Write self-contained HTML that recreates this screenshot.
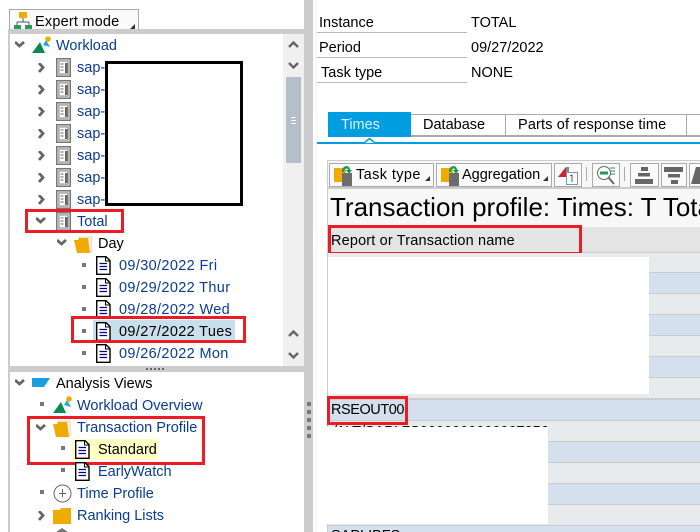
<!DOCTYPE html>
<html><head><meta charset="utf-8">
<style>
html,body{margin:0;padding:0;background:#fff}
#p{position:relative;width:700px;height:532px;overflow:hidden;background:#fff;font-family:"Liberation Sans",sans-serif;font-size:14.5px;color:#000}
#p div,#p svg{position:absolute}
.t{white-space:nowrap;line-height:18px;height:18px}
.b{color:#0a3d91}
.red{border:3px solid #ed1c24;box-sizing:border-box}
.bt{background:#fafafa;border:1px solid #aaa;box-sizing:border-box;height:24px;top:163px}
.dot{width:4px;height:4px;background:#777}
.d{letter-spacing:.35px}
</style></head><body><div id="p">
<svg width="0" height="0" style="position:absolute">
<defs>
<g id="chr"><path d="M1 0 L5 4.500 L1 9" fill="none" stroke="#666" stroke-width="2.800"/></g>
<g id="chd"><path d="M0 1 L4.500 5 L9 1" fill="none" stroke="#666" stroke-width="2.800"/></g>
<g id="srv"><rect x=".7" y=".7" width="13.600" height="17.600" fill="#ddd" stroke="#777" stroke-width="1.400"/><rect x="3" y="3" width="9" height="13" fill="#fff" stroke="#888"/><path d="M4.500 6h3M4.500 9h3M4.500 12h3" stroke="#666"/><rect x="9" y="5" width="2.500" height="10" fill="#666"/></g>
<g id="doc"><path d="M.7 .7H10L14 4.500V18.300H.7Z" fill="#fff" stroke="#000" stroke-width="1.400"/><path d="M3.500 7.500H11M3.500 10.500H11M3.500 13.500H11" stroke="#00008b" stroke-width="1.200"/><path d="M9.500 1V5H14" fill="none" stroke="#000"/></g>
<g id="mt"><path d="M0 17 L8 6 L13 17Z" fill="#0a8a50"/><path d="M11 9 L14 4 L18 11Z" fill="#1ea7e0"/><circle cx="16" cy="3" r="2.800" fill="#f0ab00"/></g>
<g id="fo"><path d="M5 1H18V16H15Z" fill="#f4f0e0" stroke="#d8d0b0" stroke-width=".7"/><path d="M0 4H4L5 2H14L16 17H3Z" fill="#f0ab00"/></g>
<g id="sq"><rect width="4" height="4" fill="#777"/></g>
<g id="tb"><rect x="1" y="3" width="12" height="14" fill="#f0ab00"/><rect x="9" y="8" width="10" height="13" fill="#6d6d6d"/><path d="M10 7 C10 1 16 1 16 5" fill="none" stroke="#1a9a5a" stroke-width="2.400"/><path d="M13 5H19L16 9Z" fill="#1a9a5a"/></g>
</defs></svg>

<!-- top left -->
<div style="left:9px;top:9px;width:130px;height:21px;background:#fafafa;border:1px solid #aaa;box-sizing:border-box"></div>
<svg style="left:14px;top:12px" width="19" height="18"><rect x="5" y="0" width="8" height="6" fill="#f0ab00"/><path d="M9 6V10M3 10H15M3 10V13M15 10V13" fill="none" stroke="#555"/><rect x="0" y="13" width="7" height="5" fill="#2b9a5a"/><rect x="11" y="13" width="7" height="5" fill="#2b9a5a"/></svg>
<div class="t" style="left:35px;top:13px;letter-spacing:.2px">Expert mode</div>
<svg style="left:130px;top:24px" width="5" height="5"><path d="M5 0V5H0Z" fill="#333"/></svg>

<!-- frame -->
<div style="left:8px;top:29px;width:297px;height:5px;background:#ccc"></div>
<div style="left:8px;top:29px;width:2px;height:503px;background:#ccc"></div>
<div style="left:8px;top:366px;width:297px;height:6px;background:#ccc"></div>
<div style="left:146px;top:368px;width:19px;height:2px;background:repeating-linear-gradient(90deg,#666 0 2px,#ccc 2px 4px)"></div>
<div style="left:304px;top:0;width:13px;height:532px;background:linear-gradient(90deg,#ccc 0 9px,#fff 9px,#fff 12px,#eef3f7 12px)"></div>
<div class="dot" style="left:307px;top:402px"></div><div class="dot" style="left:307px;top:410px"></div><div class="dot" style="left:307px;top:418px"></div><div class="dot" style="left:307px;top:426px"></div><div class="dot" style="left:307px;top:434px"></div>

<!-- scrollbar -->
<div style="left:283px;top:34px;width:21px;height:332px;background:#f0f0f0"></div>
<div style="left:286px;top:77px;width:15px;height:86px;background:#b5bfca"></div>
<div style="left:291px;top:117px;width:5px;height:7px;background:repeating-linear-gradient(180deg,#fff 0 1px,#b5bfca 1px 3px)"></div>
<svg style="left:288px;top:41px" width="11" height="7"><path d="M1 6L5.500 1.500L10 6" fill="none" stroke="#666" stroke-width="2.400"/></svg>
<svg style="left:288px;top:62px" width="11" height="7"><path d="M1 1L5.500 5.500L10 1" fill="none" stroke="#666" stroke-width="2.400"/></svg>
<svg style="left:288px;top:330px" width="11" height="7"><path d="M1 6L5.500 1.500L10 6" fill="none" stroke="#666" stroke-width="2.400"/></svg>
<svg style="left:288px;top:352px" width="11" height="7"><path d="M1 1L5.500 5.500L10 1" fill="none" stroke="#666" stroke-width="2.400"/></svg>

<!-- upper tree -->
<svg style="left:15px;top:41px" width="11" height="7"><use href="#chd"/></svg>
<svg style="left:32px;top:36px" width="20" height="18"><use href="#mt"/></svg>
<div class="t b" style="left:56px;top:37px">Workload</div>

<svg style="left:38px;top:63px" width="7" height="10"><use href="#chr"/></svg><svg style="left:56px;top:58px" width="15" height="19"><use href="#srv"/></svg><div class="t b" style="left:77px;top:59px">sap-</div>
<svg style="left:38px;top:85px" width="7" height="10"><use href="#chr"/></svg><svg style="left:56px;top:80px" width="15" height="19"><use href="#srv"/></svg><div class="t b" style="left:77px;top:81px">sap-</div>
<svg style="left:38px;top:107px" width="7" height="10"><use href="#chr"/></svg><svg style="left:56px;top:102px" width="15" height="19"><use href="#srv"/></svg><div class="t b" style="left:77px;top:103px">sap-</div>
<svg style="left:38px;top:129px" width="7" height="10"><use href="#chr"/></svg><svg style="left:56px;top:124px" width="15" height="19"><use href="#srv"/></svg><div class="t b" style="left:77px;top:125px">sap-</div>
<svg style="left:38px;top:151px" width="7" height="10"><use href="#chr"/></svg><svg style="left:56px;top:146px" width="15" height="19"><use href="#srv"/></svg><div class="t b" style="left:77px;top:147px">sap-</div>
<svg style="left:38px;top:173px" width="7" height="10"><use href="#chr"/></svg><svg style="left:56px;top:168px" width="15" height="19"><use href="#srv"/></svg><div class="t b" style="left:77px;top:169px">sap-</div>
<svg style="left:38px;top:195px" width="7" height="10"><use href="#chr"/></svg><svg style="left:56px;top:190px" width="15" height="19"><use href="#srv"/></svg><div class="t b" style="left:77px;top:191px">sap-</div>
<div style="left:105px;top:61px;width:138px;height:145px;background:#fff;border:3px solid #000;box-sizing:border-box"></div>

<svg style="left:36px;top:217px" width="11" height="7"><use href="#chd"/></svg><svg style="left:56px;top:212px" width="15" height="19"><use href="#srv"/></svg><div class="t b" style="left:77px;top:213px">Total</div>
<div class="red" style="left:25px;top:209px;width:99px;height:24px"></div>

<svg style="left:57px;top:239px" width="11" height="7"><use href="#chd"/></svg><svg style="left:74px;top:236px" width="18" height="18"><use href="#fo"/></svg><div class="t" style="left:98px;top:235px">Day</div>

<svg style="left:82px;top:263px" width="4" height="4"><use href="#sq"/></svg><svg style="left:96px;top:256px" width="15" height="19"><use href="#doc"/></svg><div class="t b d" style="left:119px;top:257px">09/30/2022 Fri</div>
<svg style="left:82px;top:285px" width="4" height="4"><use href="#sq"/></svg><svg style="left:96px;top:278px" width="15" height="19"><use href="#doc"/></svg><div class="t b d" style="left:119px;top:279px">09/29/2022 Thur</div>
<svg style="left:82px;top:307px" width="4" height="4"><use href="#sq"/></svg><svg style="left:96px;top:300px" width="15" height="19"><use href="#doc"/></svg><div class="t b d" style="left:119px;top:301px">09/28/2022 Wed</div>
<div style="left:93px;top:320px;width:142px;height:21px;background:#c8dfec"></div>
<svg style="left:82px;top:329px" width="4" height="4"><use href="#sq"/></svg><svg style="left:96px;top:322px" width="15" height="19"><use href="#doc"/></svg><div class="t d" style="left:119px;top:323px">09/27/2022 Tues</div>
<div class="red" style="left:71px;top:316px;width:175px;height:27px"></div>
<svg style="left:82px;top:351px" width="4" height="4"><use href="#sq"/></svg><svg style="left:96px;top:344px" width="15" height="19"><use href="#doc"/></svg><div class="t b d" style="left:119px;top:345px">09/26/2022 Mon</div>

<!-- lower tree -->
<svg style="left:15px;top:379px" width="11" height="7"><use href="#chd"/></svg>
<svg style="left:32px;top:378px" width="19" height="10"><path d="M0 0H18L12 9H0Z" fill="#1a9ee0"/></svg>
<div class="t" style="left:56px;top:375px">Analysis Views</div>
<svg style="left:40px;top:402px" width="4" height="4"><use href="#sq"/></svg><svg style="left:53px;top:396px" width="20" height="18"><use href="#mt"/></svg><div class="t b" style="left:77px;top:397px">Workload Overview</div>
<svg style="left:36px;top:424px" width="11" height="7"><use href="#chd"/></svg><svg style="left:53px;top:420px" width="18" height="18"><use href="#fo"/></svg><div class="t b" style="left:77px;top:419px">Transaction Profile</div>
<div style="left:72px;top:439px;width:86px;height:21px;background:#ffffc4"></div>
<svg style="left:61px;top:446px" width="4" height="4"><use href="#sq"/></svg><svg style="left:75px;top:440px" width="15" height="19"><use href="#doc"/></svg><div class="t" style="left:98px;top:441px">Standard</div>
<div class="red" style="left:27px;top:416px;width:178px;height:49px"></div>
<svg style="left:61px;top:468px" width="4" height="4"><use href="#sq"/></svg><svg style="left:75px;top:462px" width="15" height="19"><use href="#doc"/></svg><div class="t b" style="left:98px;top:463px">EarlyWatch</div>
<svg style="left:40px;top:490px" width="4" height="4"><use href="#sq"/></svg><svg style="left:53px;top:484px" width="19" height="19"><circle cx="9.500" cy="9.500" r="8.500" fill="#fff" stroke="#666"/><path d="M9.500 5V13M6 9.500H13" stroke="#666"/></svg><div class="t b" style="left:77px;top:485px">Time Profile</div>
<svg style="left:38px;top:511px" width="7" height="10"><use href="#chr"/></svg><svg style="left:53px;top:508px" width="19" height="16"><path d="M0 2H7L8 0H18V16H0Z" fill="#f0ab00"/></svg><div class="t b" style="left:77px;top:507px">Ranking Lists</div>
<svg style="left:53px;top:528px" width="18" height="4"><path d="M9 0 L15 4H3Z" fill="#777"/></svg>

<!-- right header -->
<div class="t" style="left:319px;top:14px">Instance</div>
<div class="t" style="left:471px;top:14px">TOTAL</div>
<div style="left:317px;top:32px;width:150px;height:1px;background:#bbb"></div>
<div class="t" style="left:319px;top:39px">Period</div>
<div class="t" style="left:471px;top:39px">09/27/2022</div>
<div style="left:317px;top:57px;width:150px;height:1px;background:#bbb"></div>
<div class="t" style="left:321px;top:64px">Task type</div>
<div class="t" style="left:471px;top:64px">NONE</div>
<div style="left:317px;top:82px;width:150px;height:1px;background:#bbb"></div>

<!-- tabs -->
<div style="left:328px;top:112px;width:83px;height:25px;background:#009de0"></div>
<div class="t" style="left:341px;top:116px;color:#d8f0fb">Times</div>
<div style="left:411px;top:114px;width:289px;height:23px;background:#fff;border-top:1px solid #aaa;border-bottom:2px solid #aaa;box-sizing:border-box"></div>
<div style="left:505px;top:114px;width:1px;height:22px;background:#aaa"></div>
<div style="left:686px;top:114px;width:1px;height:22px;background:#aaa"></div>
<div class="t" style="left:423px;top:116px">Database</div>
<div class="t" style="left:518px;top:116px;letter-spacing:.15px">Parts of response time</div>
<div style="left:317px;top:142px;width:383px;height:2px;background:#009de0"></div>
<svg style="left:364px;top:138px" width="11" height="6"><path d="M0 5L5.500 0L11 5Z" fill="#fff"/><path d="M0 5L5.500 .5L11 5" fill="none" stroke="#009de0" stroke-width="1.500"/></svg>

<!-- table -->
<div style="left:327px;top:160px;width:373px;height:372px;background:#f7f7f7;border-top:1px solid #ccc;border-left:1px solid #ccc;box-sizing:border-box"></div>
<div style="left:328px;top:187px;width:372px;height:2px;background:#ccc"></div>

<div class="bt" style="left:329px;width:105px"></div>
<svg style="left:333px;top:165px" width="19" height="21"><use href="#tb"/></svg>
<div class="t" style="left:356px;top:166px;letter-spacing:.4px">Task type</div>
<svg style="left:425px;top:176px" width="5" height="5"><path d="M5 0V5H0Z" fill="#333"/></svg>
<div class="bt" style="left:436px;width:116px"></div>
<svg style="left:440px;top:165px" width="19" height="21"><use href="#tb"/></svg>
<div class="t" style="left:462px;top:166px">Aggregation</div>
<svg style="left:543px;top:176px" width="5" height="5"><path d="M5 0V5H0Z" fill="#333"/></svg>
<div class="bt" style="left:554px;width:28px"></div>
<svg style="left:558px;top:166px" width="20" height="19"><path d="M0 11L8 1V11Z" fill="#d0202a"/><rect x="8" y="1" width="3" height="5" fill="#888"/><rect x="8.500" y="6.500" width="11" height="12" fill="#fff" stroke="#7a9ab0"/><path d="M12 10L14 9V16" fill="none" stroke="#555"/></svg>
<div style="left:586px;top:167px;width:1px;height:14px;background:#aaa"></div>
<div class="bt" style="left:592px;width:28px"></div>
<svg style="left:596px;top:166px" width="20" height="19"><circle cx="8" cy="7" r="6.500" fill="#fff" stroke="#666"/><rect x="4" y="5.500" width="8" height="3" fill="#1a9a5a"/><path d="M12 11L18 18" stroke="#666" stroke-width="2"/><path d="M14 2H19M15 5H19M15 8H19" stroke="#1a9a5a"/></svg>
<div style="left:624px;top:167px;width:1px;height:14px;background:#aaa"></div>
<div class="bt" style="left:630px;width:29px"></div>
<svg style="left:634px;top:166px" width="21" height="18"><rect x="7" y="1" width="7" height="4" fill="#666"/><rect x="4" y="7" width="12" height="3.500" fill="#666"/><rect x="1" y="13" width="18" height="5" fill="#666"/></svg>
<div class="bt" style="left:661px;width:26px"></div>
<svg style="left:664px;top:166px" width="20" height="18"><rect x="0" y="1" width="19" height="5" fill="#666"/><rect x="4" y="8" width="12" height="3.500" fill="#666"/><rect x="7" y="14" width="7" height="4" fill="#666"/></svg>
<div class="bt" style="left:689px;width:20px"></div>
<svg style="left:691px;top:166px" width="9" height="18"><path d="M0 18L5 1H9V18Z" fill="#666"/></svg>

<div class="t" style="left:330px;top:191px;height:32px;line-height:32px;font-size:26px">Transaction profile: Times: T Total</div>

<div style="left:328px;top:227px;width:372px;height:26px;background:#e4e4e4;border-bottom:1px solid #ccc;box-sizing:border-box"></div>
<div class="t" style="left:331px;top:232px;letter-spacing:.16px">Report or Transaction name</div>
<div class="red" style="left:328px;top:225px;width:254px;height:30px"></div>

<!-- rows -->
<div style="left:328px;top:253px;width:372px;height:279px;background:repeating-linear-gradient(180deg,#e8ebee 0 19px,#ccc 19px 20px,#d5e0ee 20px 40px,#ccc 40px 41px,#e8ebee 41px 42px)"></div>
<div style="left:328px;top:399px;width:372px;height:20px;background:#d5e0ee;border-top:1px solid #ccc"></div>
<div style="left:328px;top:420px;width:372px;height:21px;background:#e8ebee;border-top:1px solid #ccc;box-sizing:border-box"></div>
<div style="left:328px;top:441px;width:372px;height:21px;background:#d5e0ee;border-top:1px solid #ccc;box-sizing:border-box"></div>
<div style="left:328px;top:462px;width:372px;height:21px;background:#e8ebee;border-top:1px solid #ccc;box-sizing:border-box"></div>
<div style="left:328px;top:483px;width:372px;height:21px;background:#d5e0ee;border-top:1px solid #ccc;box-sizing:border-box"></div>
<div style="left:328px;top:504px;width:372px;height:21px;background:#e8ebee;border-top:1px solid #ccc;box-sizing:border-box"></div>
<div style="left:328px;top:525px;width:372px;height:7px;background:#d5e0ee;border-top:1px solid #ccc;box-sizing:border-box"></div>

<div style="left:328px;top:257px;width:321px;height:137px;background:#fff"></div>
<div class="t" style="left:331px;top:401px;letter-spacing:-.45px">RSEOUT00</div>
<div class="red" style="left:327px;top:396px;width:81px;height:29px"></div>
<div class="t" style="left:333px;top:423px">/1LT/SAPL7S0000000000007956</div>
<div style="left:317px;top:427px;width:231px;height:97px;background:#fff"></div>
<div class="t" style="left:331px;top:527px">SAPLIBFS</div>
</div></body></html>
